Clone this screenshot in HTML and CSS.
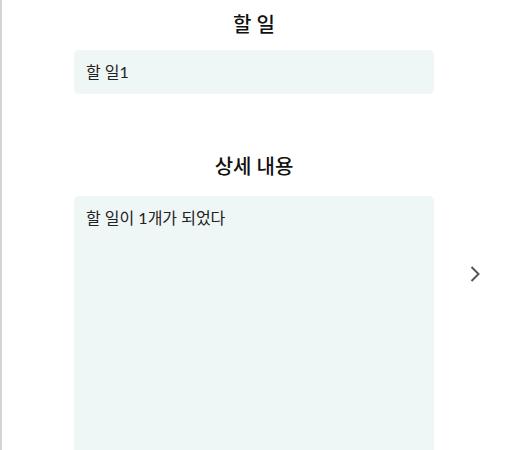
FILE: index.html
```html
<!DOCTYPE html>
<html lang="ko">
<head>
<meta charset="utf-8">
<link rel="stylesheet" href="styles.css">
</head>
<body>
<div class="page">
  <main class="form">
    <h2 class="label">할 일</h2>
    <div class="field field-title">할 일1</div>
    <h2 class="label label-detail">상세 내용</h2>
    <div class="field field-body">할 일이 1개가 되었다</div>
  </main>
  <button class="next" aria-label="다음">
    <svg width="12" height="18" viewBox="0 0 12 18"><path d="M2.5 2 L9.5 9 L2.5 16" fill="none" stroke="#555" stroke-width="2"/></svg>
  </button>
</div>
</body>
</html>
```
FILE: styles.css
```css
html, body {
  margin: 0;
  padding: 0;
  background: #fff;
}
body {
  font-family: Lato, "Noto Sans CJK KR", sans-serif;
  color: #222;
}
.page {
  position: relative;
  height: 450px;
  overflow: hidden;
  border-left: 2px solid #d4d4d4;
  box-sizing: border-box;
  display: flex;
  justify-content: center;
  align-items: flex-start;
}
.form {
  width: 360px;
  margin-left: 1px;
  display: flex;
  flex-direction: column;
  flex-shrink: 0;
}
.label {
  flex-shrink: 0;
  margin: 0;
  padding-top: 10px;
  height: 50px;
  box-sizing: border-box;
  font-size: 20px;
  line-height: 28px;
  font-weight: 500;
  text-align: center;
  color: #111;
}
.label-detail {
  margin-top: 56px;
  height: 46px;
  padding-top: 2px;
}
.field {
  flex-shrink: 0;
  background: #eff6f6;
  border-radius: 5px;
  padding: 11px 12px;
  font-size: 16px;
  line-height: 22px;
  color: #222;
  box-sizing: border-box;
}
.field-title {
  height: 44px;
}
.field-body {
  height: 300px;
}
.next {
  position: absolute;
  left: 467px;
  top: 265px;
  border: 0;
  background: none;
  padding: 0;
  width: 12px;
  height: 18px;
}
.next svg { display: block; }
```
